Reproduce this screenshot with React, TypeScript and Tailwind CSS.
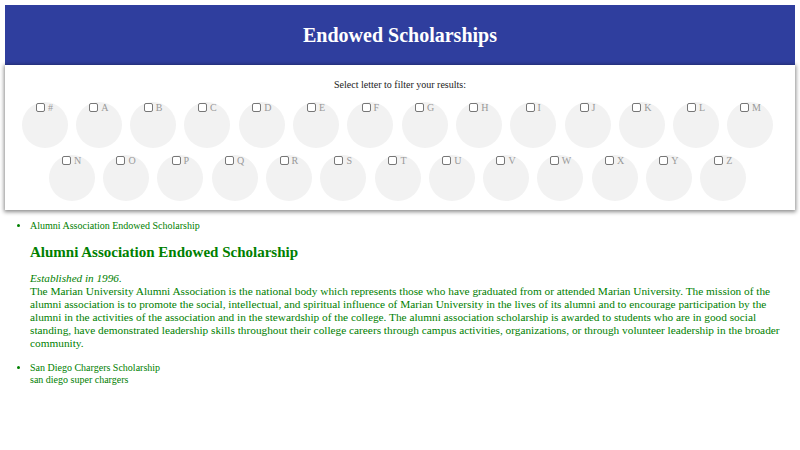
const letters = ['#', 'A', 'B', 'C', 'D', 'E', 'F', 'G', 'H', 'I', 'J', 'K', 'L', 'M', 'N', 'O', 'P', 'Q', 'R', 'S', 'T', 'U', 'V', 'W', 'X', 'Y', 'Z'];

function LetterBubble({ letter }: { letter: string }) {
  return (
    <div className="w-[46px] h-[46px] rounded-full bg-[#f2f2f2] flex justify-center">
      <label className="flex items-start gap-[3px] h-[12px] text-[10px] leading-[11px] text-[#999]">
        <input
          type="checkbox"
          className="appearance-none mt-[1px] w-[9px] h-[9px] border border-[#777] rounded-[2px] bg-white"
        />
        <span>{letter}</span>
      </label>
    </div>
  );
}

export default function App() {
  return (
    <div className="p-[5px] bg-white min-h-[450px] font-['Liberation_Serif',serif]">
      {/* Banner */}
      <header className="h-[60px] bg-[#2f3e9e] flex items-center justify-center">
        <h1 className="text-white text-[20px] leading-[24px] font-bold">Endowed Scholarships</h1>
      </header>

      {/* Letter filter */}
      <section className="bg-white shadow-[0_1px_4px_1px_rgba(0,0,0,0.45)] pt-[13px] pb-[9px] px-[8px]">
        <p className="text-center text-[10px] leading-[14px] text-[#222]">Select letter to filter your results:</p>
        <div className="mt-[10px] flex flex-wrap justify-center gap-x-[8.3px] gap-y-[7px] pr-[5px]">
          {letters.map((l) => (
            <LetterBubble key={l} letter={l} />
          ))}
        </div>
      </section>

      {/* Results */}
      <ul className="list-disc pl-[25px] mt-[10px] text-[#008000]">
        <li className="text-[10px] leading-[12px]">
          <div>Alumni Association Endowed Scholarship</div>
          <h2 className="mt-[11px] text-[15px] leading-[18px] font-bold">Alumni Association Endowed Scholarship</h2>
          <div className="mt-[11px] text-[11.3px] leading-[13px] pr-[10px]">
            <em className="text-[11.2px]">Established in 1996.</em>
            <br />
            The Marian University Alumni Association is the national body which represents those who have graduated from or attended Marian University. The mission of the alumni association is to promote the social, intellectual, and spiritual influence of Marian University in the lives of its alumni and to encourage participation by the alumni in the activities of the association and in the stewardship of the college. The alumni association scholarship is awarded to students who are in good social standing, have demonstrated leadership skills throughout their college careers through campus activities, organizations, or through volunteer leadership in the broader community.
          </div>
        </li>
        <li className="mt-[12px] text-[10px] leading-[12px]">
          <div>San Diego Chargers Scholarship</div>
          <div>san diego super chargers</div>
        </li>
      </ul>
    </div>
  );
}
